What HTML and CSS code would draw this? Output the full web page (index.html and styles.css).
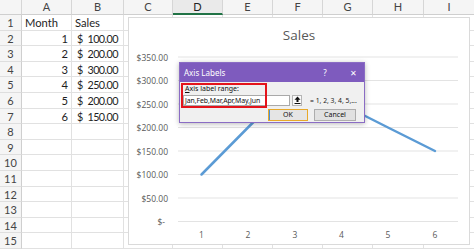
FILE: index.html
```html
<!DOCTYPE html>
<html>
<head>
<meta charset="utf-8">
<link rel="stylesheet" href="styles.css">
</head>
<body>
<div class="sheet">
  <div class="corner"></div>
  <div class="ch">A</div><div class="ch">B</div><div class="ch">C</div><div class="ch sel">D</div><div class="ch">E</div><div class="ch">F</div><div class="ch">G</div><div class="ch">H</div><div class="ch">I</div>

  <div class="rh">1</div><div class="c txt">Month</div><div class="c txt">Sales</div><div class="c"></div><div class="c"></div><div class="c"></div><div class="c"></div><div class="c"></div><div class="c"></div><div class="c"></div>
  <div class="rh">2</div><div class="c num">1</div><div class="c acc"><span>$</span><span class="amt">100.00</span></div><div class="c"></div><div class="c"></div><div class="c"></div><div class="c"></div><div class="c"></div><div class="c"></div><div class="c"></div>
  <div class="rh">3</div><div class="c num">2</div><div class="c acc"><span>$</span><span class="amt">200.00</span></div><div class="c"></div><div class="c"></div><div class="c"></div><div class="c"></div><div class="c"></div><div class="c"></div><div class="c"></div>
  <div class="rh">4</div><div class="c num">3</div><div class="c acc"><span>$</span><span class="amt">300.00</span></div><div class="c"></div><div class="c"></div><div class="c"></div><div class="c"></div><div class="c"></div><div class="c"></div><div class="c"></div>
  <div class="rh">5</div><div class="c num">4</div><div class="c acc"><span>$</span><span class="amt">250.00</span></div><div class="c"></div><div class="c"></div><div class="c"></div><div class="c"></div><div class="c"></div><div class="c"></div><div class="c"></div>
  <div class="rh">6</div><div class="c num">5</div><div class="c acc"><span>$</span><span class="amt">200.00</span></div><div class="c"></div><div class="c"></div><div class="c"></div><div class="c"></div><div class="c"></div><div class="c"></div><div class="c"></div>
  <div class="rh">7</div><div class="c num">6</div><div class="c acc"><span>$</span><span class="amt">150.00</span></div><div class="c"></div><div class="c"></div><div class="c"></div><div class="c"></div><div class="c"></div><div class="c"></div><div class="c"></div>
  <div class="rh">8</div><div class="c"></div><div class="c"></div><div class="c"></div><div class="c"></div><div class="c"></div><div class="c"></div><div class="c"></div><div class="c"></div><div class="c"></div>
  <div class="rh">9</div><div class="c"></div><div class="c"></div><div class="c"></div><div class="c"></div><div class="c"></div><div class="c"></div><div class="c"></div><div class="c"></div><div class="c"></div>
  <div class="rh">10</div><div class="c"></div><div class="c"></div><div class="c"></div><div class="c"></div><div class="c"></div><div class="c"></div><div class="c"></div><div class="c"></div><div class="c"></div>
  <div class="rh">11</div><div class="c"></div><div class="c"></div><div class="c"></div><div class="c"></div><div class="c"></div><div class="c"></div><div class="c"></div><div class="c"></div><div class="c"></div>
  <div class="rh">12</div><div class="c"></div><div class="c"></div><div class="c"></div><div class="c"></div><div class="c"></div><div class="c"></div><div class="c"></div><div class="c"></div><div class="c"></div>
  <div class="rh">13</div><div class="c"></div><div class="c"></div><div class="c"></div><div class="c"></div><div class="c"></div><div class="c"></div><div class="c"></div><div class="c"></div><div class="c"></div>
  <div class="rh">14</div><div class="c"></div><div class="c"></div><div class="c"></div><div class="c"></div><div class="c"></div><div class="c"></div><div class="c"></div><div class="c"></div><div class="c"></div>
  <div class="rh">15</div><div class="c"></div><div class="c"></div><div class="c"></div><div class="c"></div><div class="c"></div><div class="c"></div><div class="c"></div><div class="c"></div><div class="c"></div>
</div>

<div class="chart">
  <svg class="plot" width="342" height="228" viewBox="0 0 342 228">
    <text class="title" x="171" y="23" text-anchor="middle">Sales</text>
    <g class="grid">
      <line x1="50" y1="40" x2="330" y2="40"/>
      <line x1="50" y1="63.5" x2="330" y2="63.5"/>
      <line x1="50" y1="87" x2="330" y2="87"/>
      <line x1="50" y1="110.5" x2="330" y2="110.5"/>
      <line x1="50" y1="134" x2="330" y2="134"/>
      <line x1="50" y1="157.5" x2="330" y2="157.5"/>
      <line x1="50" y1="181" x2="330" y2="181"/>
      <line x1="50" y1="204.5" x2="330" y2="204.5"/>
    </g>
    <g class="ylab" text-anchor="end">
      <text x="40" y="43.5">$350.00</text>
      <text x="40" y="67">$300.00</text>
      <text x="40" y="90.5">$250.00</text>
      <text x="40" y="114">$200.00</text>
      <text x="40" y="137.5">$150.00</text>
      <text x="40" y="161">$100.00</text>
      <text x="40" y="184.5">$50.00</text>
      <text x="37" y="208">$-</text>
    </g>
    <g class="xlab" text-anchor="middle">
      <text x="73.5" y="220.5">1</text>
      <text x="120" y="220.5">2</text>
      <text x="167" y="220.5">3</text>
      <text x="213.5" y="220.5">4</text>
      <text x="260" y="220.5">5</text>
      <text x="307" y="220.5">6</text>
    </g>
    <polyline class="series" points="73.5,157.5 120,110.5 167,63.5 213.5,87 260,110.5 307,134"/>
  </svg>
</div>

<div class="dialog">
  <div class="dtitle">
    <span class="dname">Axis Labels</span>
    <span class="dq">?</span>
    <span class="dx">&#x2715;</span>
  </div>
  <div class="dbody">
    <div class="dlabel"><u>A</u>xis label range:</div>
    <div class="drow">
      <div class="dinput">Jan,Feb,Mar,Apr,May,Jun</div>
      <div class="dup"><svg width="7" height="8" viewBox="0 0 7 8"><path d="M3.5 0.5 L6.5 3.8 L4.5 3.8 L4.5 6 L2.5 6 L2.5 3.8 L0.5 3.8 Z" fill="#111"/><rect x="0.5" y="7" width="6" height="1" fill="#111"/></svg></div>
      <div class="dpreview">= 1, 2, 3, 4, 5,...</div>
    </div>
    <div class="dbtns">
      <div class="btn ok">OK</div>
      <div class="btn">Cancel</div>
    </div>
  </div>
  <div class="redbox"></div>
</div>
</body>
</html>
```

FILE: styles.css
```css
html, body {
  margin: 0;
  padding: 0;
}
body {
  width: 474px;
  height: 249px;
  overflow: hidden;
  position: relative;
  background: #fff;
  font-family: Lato, "Liberation Sans", sans-serif;
}
.sheet {
  display: grid;
  grid-template-columns: 22px 50px 52px 49px 50px 50px 50px 50px 51px 51px;
  grid-template-rows: 15px repeat(15, 15.6px);
}
.corner, .ch, .rh, .c {
  box-sizing: border-box;
  border-right: 1px solid #e1e1e1;
  border-bottom: 1px solid #e1e1e1;
}
.corner, .ch {
  background: #f5f5f5;
  border-right-color: #d6d6d6;
  border-bottom-color: #cfcfcf;
}
.ch {
  font-size: 11px;
  color: #444;
  text-align: center;
  line-height: 14px;
}
.ch.sel {
  border-bottom: 2px solid #217346;
  color: #222;
  background: #eaeaea;
}
.rh {
  background: #f5f5f5;
  border-right-color: #cfcfcf;
  border-bottom-color: #dedede;
  font-size: 11px;
  color: #444;
  text-align: center;
  line-height: 15px;
}
.c {
  font-size: 11.2px;
  color: #1e1e1e;
  line-height: 15px;
  white-space: nowrap;
  overflow: visible;
}
.txt {
  padding-left: 3px;
}
.num {
  text-align: right;
  padding-right: 3px;
}
.acc {
  display: flex;
  justify-content: space-between;
  padding-left: 5px;
  padding-right: 5px;
  font-size: 10.8px;
}
.amt {
  letter-spacing: -0.55px;
}
.chart {
  position: absolute;
  left: 128px;
  top: 17px;
  width: 342px;
  height: 228px;
  background: #fff;
  box-sizing: border-box;
  border: 1px solid #dadada;
}
.plot {
  position: absolute;
  left: -1px;
  top: -1px;
  font-family: "Open Sans", "Liberation Sans", sans-serif;
}
.title {
  font-size: 13.5px;
  fill: #595959;
}
.grid line {
  stroke: #e3e3e3;
  stroke-width: 1;
}
.ylab text, .xlab text {
  font-size: 8.5px;
  fill: #595959;
}
.series {
  fill: none;
  stroke: #5b9bd5;
  stroke-width: 2.5;
  stroke-linejoin: round;
  stroke-linecap: round;
}
.dialog {
  position: absolute;
  left: 179px;
  top: 62px;
  width: 186px;
  height: 61px;
  box-sizing: border-box;
  background: #f0f0f0;
  border: 1px solid #8a6cc4;
  box-shadow: 0 1px 5px rgba(0,0,0,0.28);
  font-family: "Noto Sans", "Liberation Sans", sans-serif;
}
.dtitle {
  height: 19px;
  background: #7e5bbe;
  color: #fff;
  display: flex;
  align-items: center;
  font-size: 8px;
  padding-left: 4px;
}
.dname {
  flex: 1;
}
.dq {
  width: 14px;
  text-align: center;
  margin-right: 14px;
  font-size: 8px;
}
.dx {
  width: 14px;
  text-align: center;
  margin-right: 4px;
  font-size: 8px;
}
.dbody {
  padding: 2px 3px 0 3px;
  display: flex;
  flex-direction: column;
}
.dlabel {
  font-size: 7px;
  line-height: 10px;
  color: #111;
  padding-left: 2px;
}
.drow {
  display: flex;
  align-items: center;
  height: 12px;
}
.dinput {
  width: 107px;
  height: 11px;
  box-sizing: border-box;
  background: #fff;
  border: 1px solid #a9a9a9;
  font-size: 6.9px;
  letter-spacing: -0.08px;
  line-height: 9px;
  padding-left: 1px;
  color: #111;
  white-space: nowrap;
  overflow: hidden;
}
.dup {
  width: 10px;
  height: 11px;
  box-sizing: border-box;
  margin-left: 2px;
  border: 1px solid #b5b5b5;
  background: #fafafa;
  display: flex;
  align-items: center;
  justify-content: center;
}
.dpreview {
  font-size: 6.8px;
  margin-left: 8px;
  color: #222;
  white-space: nowrap;
}
.dbtns {
  display: flex;
  margin-top: 3px;
  padding-left: 85px;
  gap: 6px;
}
.btn {
  width: 42px;
  height: 12px;
  box-sizing: border-box;
  border: 1px solid #adadad;
  background: #e1e1e1;
  font-size: 7px;
  line-height: 10px;
  text-align: center;
  color: #111;
}
.btn.ok {
  width: 40px;
  border: 1.5px solid #e8a92a;
  box-shadow: inset 1px 0 0 #4a90d9;
  background: #e5e5e5;
}
.redbox {
  position: absolute;
  left: 1px;
  top: 20px;
  width: 86px;
  height: 25px;
  box-sizing: border-box;
  border: 2px solid #e4141b;
}
```
